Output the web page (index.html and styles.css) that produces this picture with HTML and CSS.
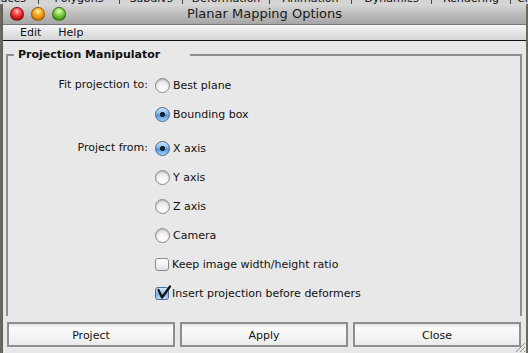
FILE: index.html
```html
<!DOCTYPE html>
<html>
<head>
<meta charset="utf-8">
<link rel="stylesheet" href="styles.css">
</head>
<body>
<div class="desk">
  <span class="d1">Surfaces</span><span class="d2">Polygons</span><span class="d3">Subdivs</span><span class="d4">Deformation</span><span class="d5">Animation</span><span class="d6">Dynamics</span><span class="d7">Rendering</span><span class="d8">Cloth</span>
</div>
<div class="window">
  <div class="titlebar">
    <div class="lights"><span class="light red"></span><span class="light amber"></span><span class="light green"></span></div>
    <div class="title">Planar Mapping Options</div>
    <div></div>
  </div>
  <div class="menubar"><span>Edit</span><span>Help</span></div>
  <div class="scroll">
    <fieldset class="frame">
      <legend>Projection Manipulator</legend>
      <div class="form">
        <div class="row"><div class="lbl">Fit projection to:</div><div class="opt"><span class="radio"></span>Best plane</div></div>
        <div class="row"><div class="lbl"></div><div class="opt"><span class="radio on"></span>Bounding box</div></div>
        <div class="row sec"><div class="lbl">Project from:</div><div class="opt"><span class="radio on"></span>X axis</div></div>
        <div class="row"><div class="lbl"></div><div class="opt"><span class="radio"></span>Y axis</div></div>
        <div class="row"><div class="lbl"></div><div class="opt"><span class="radio"></span>Z axis</div></div>
        <div class="row"><div class="lbl"></div><div class="opt"><span class="radio"></span>Camera</div></div>
        <div class="row"><div class="lbl"></div><div class="opt"><span class="check"></span>Keep image width/height ratio</div></div>
        <div class="row"><div class="lbl"></div><div class="opt"><span class="check on"><svg class="tick" viewBox="0 0 16 15" width="16" height="15"><path d="M2.5 5 L6 12.5 L14 1.5" fill="none" stroke="#111" stroke-width="2.2" stroke-linecap="round" stroke-linejoin="round"/></svg></span>Insert projection before deformers</div></div>
      </div>
    </fieldset>
  </div>
  <div class="buttons">
    <div class="btn">Project</div>
    <div class="btn">Apply</div>
    <div class="btn">Close</div>
  </div>
  <svg class="grip" viewBox="0 0 12 12" width="12" height="12"><path d="M11 2 L2 11 M11 6 L6 11 M11 10 L10 11" stroke="#8a8a8a" stroke-width="1"/></svg>
</div>
</body>
</html>
```
FILE: styles.css
```css
html, body {
  margin: 0;
  padding: 0;
}
body {
  width: 528px;
  height: 353px;
  overflow: hidden;
  background: #6f665d;
  font-family: "DejaVu Sans", "Liberation Sans", sans-serif;
  color: #111;
}
.desk {
  height: 4px;
  overflow: hidden;
  background: #d4d4d4;
  display: flex;
}
.desk span {
  flex: none;
  height: 20px;
  margin-top: -7px;
  font-size: 11px;
  line-height: 12px;
  border-right: 1px solid #444;
  box-sizing: border-box;
  overflow: hidden;
  white-space: nowrap;
  display: flex;
  justify-content: center;
}
.desk .d1 { width: 39px; justify-content: flex-end; padding-right: 12px; }
.desk .d2 { width: 81px; }
.desk .d3 { width: 63px; }
.desk .d4 { width: 87px; }
.desk .d5 { width: 82px; }
.desk .d6 { width: 80px; }
.desk .d7 { width: 79px; }
.desk .d8 { width: 30px; justify-content: flex-start; padding-left: 6px; }

.window {
  position: relative;
  margin-left: 2px;
  width: 524px;
  height: 349px;
  box-sizing: border-box;
  border-left: 1px solid #5c5c5c;
  background: #e8e8e8;
  display: flex;
  flex-direction: column;
}
.titlebar {
  height: 20px;
  flex: none;
  border-bottom: 1px solid #777;
  background: linear-gradient(#d8d8d8, #bcbcbc 50%, #a6a6a6);
  display: grid;
  grid-template-columns: 1fr auto 1fr;
  align-items: center;
}
.lights {
  display: flex;
  gap: 7px;
  padding-left: 7px;
}
.light {
  width: 14px;
  height: 14px;
  border-radius: 50%;
  box-sizing: border-box;
  border: 1px solid rgba(60, 20, 0, 0.55);
}
.red {
  background: radial-gradient(circle at 50% 28%, #ffd0d0 0, #ff6a6a 22%, #d8191c 60%, #900 100%);
}
.amber {
  background: radial-gradient(circle at 50% 28%, #fff0c0 0, #ffc040 25%, #e58a0c 62%, #a55800 100%);
  border-color: rgba(110, 60, 0, 0.6);
}
.green {
  background: radial-gradient(circle at 50% 28%, #eaffd0 0, #a6e86a 25%, #5aad2a 62%, #2f7410 100%);
  border-color: rgba(30, 80, 0, 0.6);
}
.title {
  font-size: 13px;
  color: #1a1a1a;
  line-height: 20px;
}
.menubar {
  height: 15px;
  flex: none;
  border-bottom: 1px solid #111;
  background: linear-gradient(#f6f6f6, #e4e4e4 50%, #d6d6d6);
  display: flex;
  align-items: center;
  gap: 17px;
  padding-left: 17px;
  font-size: 11px;
}
.scroll {
  height: 275px;
  flex: none;
  overflow: hidden;
  padding: 0 4px 0 3px;
}
.frame {
  margin: 7px 0 0;
  padding: 0;
  min-width: 0;
  height: 320px;
  border: 2px solid #8e8e8e;
}
.frame legend {
  margin-left: 6px;
  padding: 0 30px 0 4px;
  font-size: 11px;
  line-height: 14px;
  font-weight: bold;
  color: #111;
}
.form {
  padding-top: 9px;
  display: flex;
  flex-direction: column;
}
.row {
  height: 29px;
  display: flex;
  align-items: center;
  font-size: 11px;
}
.row.sec {
  margin-top: 5px;
}
.lbl {
  width: 140px;
  flex: none;
  text-align: right;
  margin-top: -2px;
}
.opt {
  margin-left: 7px;
  display: flex;
  align-items: center;
  gap: 3px;
}
.radio {
  width: 15px;
  height: 15px;
  flex: none;
  box-sizing: border-box;
  border-radius: 50%;
  border: 1px solid #8a8a8a;
  background: radial-gradient(circle at 50% 85%, #ffffff 0, #f3f3f3 45%, #d2d2d2 100%);
  box-shadow: inset 0 1px 1px rgba(0, 0, 0, 0.18);
}
.radio.on {
  border-color: #46688f;
  background:
    radial-gradient(circle at 50% 50%, #17222e 0, #17222e 2.2px, transparent 2.9px),
    linear-gradient(#cfe6fc, #7fb3ea 48%, #4a8fdc 52%, #a6d3fb);
  box-shadow: none;
}
.check {
  position: relative;
  width: 14px;
  height: 13px;
  flex: none;
  box-sizing: border-box;
  border-radius: 3px;
  border: 1px solid #8a8a8a;
  background: linear-gradient(#ffffff, #f2f2f2 50%, #e2e2e2);
}
.check.on {
  border-color: #4d7096;
  background: linear-gradient(#d6eafc, #93c1ee 48%, #74abe8 52%, #c0e0fb);
}
.tick {
  position: absolute;
  left: 0;
  top: -3px;
}
.buttons {
  display: grid;
  grid-template-columns: repeat(3, 1fr);
  gap: 5px;
  padding: 6px 5px 0 4px;
}
.btn {
  height: 25px;
  box-sizing: border-box;
  border: 2px solid #8e8e8e;
  background: linear-gradient(#e4e4e4 0, #fbfbfb 18%, #f4f4f4 60%, #ebebeb 100%);
  display: flex;
  align-items: center;
  justify-content: center;
  font-size: 11px;
  line-height: 13px;
  padding-top: 1px;
  color: #111;
}
.grip {
  position: absolute;
  right: 0;
  bottom: 0;
}
```
